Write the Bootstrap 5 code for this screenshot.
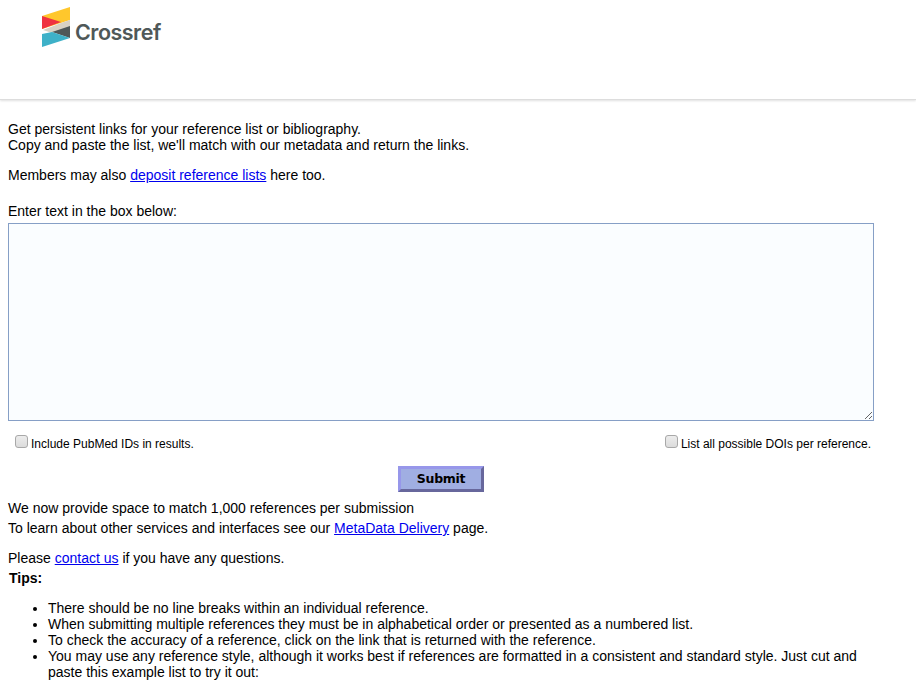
<!DOCTYPE html>
<html lang="en">
<head>
<meta charset="utf-8">
<title>Simple Text Query</title>
<link href="https://cdn.jsdelivr.net/npm/bootstrap@5.3.0/dist/css/bootstrap.min.css" rel="stylesheet">
<style>
body{font-family:"Liberation Sans",Arial,sans-serif;font-size:14px;line-height:16px;color:#000;background:#fff}
a{color:#00e;text-decoration:underline}
p{margin:0}
.site-head{height:100px;padding:7px 0 0 42px;border-bottom:1px solid #ddd;box-shadow:0 1px 2px rgba(0,0,0,.12)}
.brand-word{font-family:Inter,"Liberation Sans",sans-serif;font-size:21.5px;font-weight:600;color:#4f5858;line-height:22px;letter-spacing:-.5px;margin:14px 0 0 5px}
.page-body{padding:21px 8px 0}
.intro-gap{margin-top:14px}
.enter-label{margin-top:20px;margin-bottom:4px}
.ref-box{display:block;width:866px;height:198px;background:#fafdff;border:1px solid #869fc6;border-radius:0;padding:2px;outline:0}
.opt-row{width:863px;height:45px;font-size:12px;padding-left:7px;padding-top:15px}
.opt-check{appearance:none;flex:none;width:13px;height:13px;margin:0 3px 0 0;position:relative;top:-3px;background:linear-gradient(#ececec,#dcdcdc);border:1px solid #a8a8a8;border-radius:3px}
.submit-row{width:866px}
.submit-btn{width:86px;height:26px;padding:0;background:#a0aee2;border:3px solid;border-color:#9797ea #67679c #67679c #9797ea;border-radius:0;font-family:"DejaVu Sans",sans-serif;font-size:12.5px;font-weight:700;letter-spacing:-.3px;color:#000;line-height:18px}
.gap-a{margin-top:8px}
.gap-b{margin-top:4px}
.gap-c{margin-top:14px}
.gap-d{margin-top:4px}
.tips-list{margin:14px 0 0;padding-left:40px;width:866px}
.tips-head{padding-left:1px}
</style>
</head>
<body>
<header class="site-head d-flex align-items-start">
<svg width="28" height="40" viewBox="0 0 28 40" aria-hidden="true">
<polygon points="0,9 28,0 28,13 0,22" fill="#ffc72c"/>
<polygon points="0,9 19,15 0,22" fill="#ef3340"/>
<polygon points="1,23 19,16 28,13 28,20 10,26" fill="#d8d2c4"/>
<polygon points="28,19 28,31 10,25" fill="#4f5858"/>
<polygon points="0,27 10,25 28,31 0,40" fill="#3eb1c8"/>
</svg>
<div class="brand-word">Crossref</div>
</header>
<main class="page-body">
<p>Get persistent links for your reference list or bibliography.<br>Copy and paste the list, we'll match with our metadata and return the links.</p>
<p class="intro-gap">Members may also <a href="#">deposit reference lists</a> here too.</p>
<p class="enter-label">Enter text in the box below:</p>
<form>
<textarea class="ref-box" aria-label="References"></textarea>
<div class="opt-row d-flex justify-content-between">
<label class="d-flex align-items-center align-self-start"><input type="checkbox" class="opt-check">Include PubMed IDs in results.</label>
<label class="d-flex align-items-center align-self-start"><input type="checkbox" class="opt-check">List all possible DOIs per reference.</label>
</div>
<div class="submit-row d-flex justify-content-center"><button type="button" class="btn submit-btn">Submit</button></div>
</form>
<p class="gap-a">We now provide space to match 1,000 references per submission</p>
<p class="gap-b">To learn about other services and interfaces see our <a href="#">MetaData Delivery</a> page.</p>
<p class="gap-c">Please <a href="#">contact us</a> if you have any questions.</p>
<p class="gap-d tips-head"><b>Tips:</b></p>
<ul class="tips-list">
<li>There should be no line breaks within an individual reference.</li>
<li>When submitting multiple references they must be in alphabetical order or presented as a numbered list.</li>
<li>To check the accuracy of a reference, click on the link that is returned with the reference.</li>
<li>You may use any reference style, although it works best if references are formatted in a consistent and standard style. Just cut and paste this example list to try it out:</li>
</ul>
</main>
</body>
</html>
